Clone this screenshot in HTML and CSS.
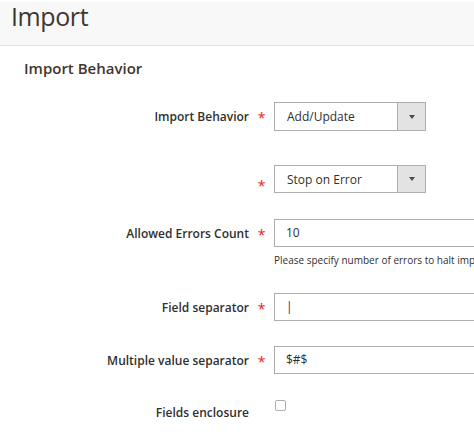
FILE: index.html
```html
<!DOCTYPE html>
<html>
<head>
<meta charset="utf-8">
<link rel="stylesheet" href="styles.css">
</head>
<body>
<div class="page-title-bar">
  <h1 class="page-title">Import</h1>
</div>
<div class="content">
  <h2 class="section-title">Import Behavior</h2>
  <div class="row row-1">
    <div class="label">Import Behavior</div>
    <div class="star">*</div>
    <div class="control">
      <div class="select s1"><span class="sel-text">Add/Update</span><span class="sel-arrow"><span class="tri"></span></span></div>
    </div>
  </div>
  <div class="row row-2">
    <div class="label"></div>
    <div class="star star-low">*</div>
    <div class="control">
      <div class="select s2"><span class="sel-text">Stop on Error</span><span class="sel-arrow"><span class="tri"></span></span></div>
    </div>
  </div>
  <div class="row row-3">
    <div class="label">Allowed Errors Count</div>
    <div class="star">*</div>
    <div class="control">
      <div class="input">10</div>
    </div>
  </div>
  <div class="note">Please specify number of errors to halt import process</div>
  <div class="row row-4">
    <div class="label">Field separator</div>
    <div class="star">*</div>
    <div class="control">
      <div class="input">|</div>
    </div>
  </div>
  <div class="row row-5">
    <div class="label">Multiple value separator</div>
    <div class="star">*</div>
    <div class="control">
      <div class="input">$#$</div>
    </div>
  </div>
  <div class="row row-6">
    <div class="label label-cb">Fields enclosure</div>
    <div class="star"></div>
    <div class="control control-cb">
      <span class="checkbox"></span>
    </div>
  </div>
</div>
</body>
</html>
```

FILE: styles.css
```css
html, body {
  margin: 0;
  padding: 0;
  background: #ffffff;
  overflow: hidden;
  width: 474px;
  height: 440px;
}
body {
  font-family: "Open Sans", "Liberation Sans", sans-serif;
  color: #303030;
}
.page-title-bar {
  margin-top: 2px;
  height: 43px;
  background: #f8f8f8;
  border-bottom: 1px solid #e3e3e3;
  padding-left: 11px;
  overflow: hidden;
}
.page-title {
  margin: 0;
  font-size: 25px;
  font-weight: 400;
  letter-spacing: -0.4px;
  color: #41362f;
  line-height: 30px;
  margin-top: -1px;
}
.content {
  padding-left: 24px;
}
.section-title {
  margin: 12px 0 0 0;
  font-size: 15px;
  font-weight: 600;
  color: #41362f;
  line-height: 20px;
}
.row {
  display: flex;
  align-items: center;
}
.label {
  width: 225px;
  flex: none;
  text-align: right;
  font-size: 12px;
  font-weight: 600;
  color: #303030;
  white-space: nowrap;
  line-height: 17px;
}
.star {
  width: 25px;
  flex: none;
  text-align: center;
  color: #e22626;
  font-size: 14px;
  padding-top: 2px;
}
.star-low {
  align-self: flex-end;
  padding-top: 0;
  line-height: 20px;
  margin-bottom: -3px;
}
.control {
  flex: none;
}
.row-1 { margin-top: 24px; }
.row-2 { margin-top: 34px; }
.row-3 { margin-top: 26px; }
.row-4 { margin-top: 25px; }
.row-5 { margin-top: 25px; }
.row-6 { margin-top: 28px; align-items: flex-start; }

.select {
  box-sizing: border-box;
  height: 29px;
  border: 1px solid #adadad;
  display: flex;
  align-items: stretch;
  background: #fff;
}
.s1 { width: 152px; }
.s2 { width: 152px; height: 28px; }
.sel-text {
  flex: 1;
  padding-left: 12px;
  font-size: 12px;
  color: #303030;
  display: flex;
  align-items: center;
}
.sel-arrow {
  width: 27px;
  background: #e3e3e3;
  border-left: 1px solid #adadad;
  display: flex;
  align-items: center;
  justify-content: center;
}
.tri {
  width: 0;
  height: 0;
  border-left: 3px solid transparent;
  border-right: 3px solid transparent;
  border-top: 4px solid #514943;
}
.input {
  box-sizing: border-box;
  width: 320px;
  height: 28px;
  border: 1px solid #adadad;
  padding-left: 11px;
  font-size: 12px;
  line-height: 26px;
  color: #303030;
}
.note {
  margin-left: 250px;
  margin-top: 6px;
  font-size: 10px;
  color: #303030;
  white-space: nowrap;
  line-height: 15px;
}
.label-cb {
  padding-top: 2px;
}
.checkbox {
  display: block;
  box-sizing: border-box;
  width: 11px;
  height: 11px;
  border: 1px solid #adadad;
  border-radius: 2px;
  margin-left: 1px;
  margin-top: -2px;
  background: #fff;
}
```
